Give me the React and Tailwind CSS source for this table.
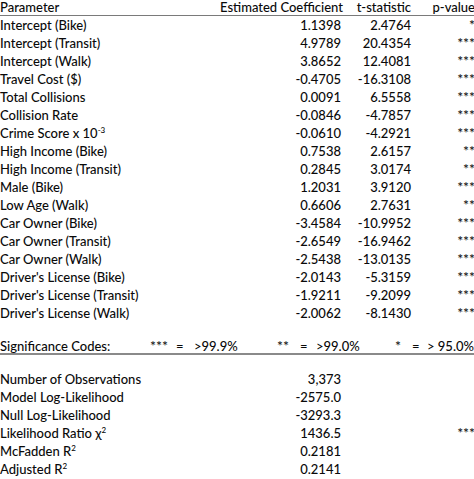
// Multinomial logit estimation results, laid out like a spreadsheet table.

const sup = (txt) => <sup className="-top-[5px] text-[8px]">{txt}</sup>;

const rows = [
  ["Intercept (Bike)", "1.1398", "2.4764", "*"],
  ["Intercept (Transit)", "4.9789", "20.4354", "***"],
  ["Intercept (Walk)", "3.8652", "12.4081", "***"],
  ["Travel Cost ($)", "-0.4705", "-16.3108", "***"],
  ["Total Collisions", "0.0091", "6.5558", "***"],
  ["Collision Rate", "-0.0846", "-4.7857", "***"],
  [<>Crime Score x 10{sup("-3")}</>, "-0.0610", "-4.2921", "***"],
  ["High Income (Bike)", "0.7538", "2.6157", "**"],
  ["High Income (Transit)", "0.2845", "3.0174", "**"],
  ["Male (Bike)", "1.2031", "3.9120", "***"],
  ["Low Age (Walk)", "0.6606", "2.7631", "**"],
  ["Car Owner (Bike)", "-3.4584", "-10.9952", "***"],
  ["Car Owner (Transit)", "-2.6549", "-16.9462", "***"],
  ["Car Owner (Walk)", "-2.5438", "-13.0135", "***"],
  ["Driver's License (Bike)", "-2.0143", "-5.3159", "***"],
  ["Driver's License (Transit)", "-1.9211", "-9.2099", "***"],
  ["Driver's License (Walk)", "-2.0062", "-8.1430", "***"],
];

const stats = [
  ["Number of Observations", "3,373", ""],
  ["Model Log-Likelihood", "-2575.0", ""],
  ["Null Log-Likelihood", "-3293.3", ""],
  [<>Likelihood Ratio χ{sup("2")}</>, "1436.5", "***"],
  [<>McFadden R{sup("2")}</>, "0.2181", ""],
  [<>Adjusted R{sup("2")}</>, "0.2141", ""],
];

function Row({ label, coef, t, p }) {
  return (
    <div className="grid h-[18px] grid-cols-[220px_121px_70px_64px] items-center leading-[18px]">
      <span className="whitespace-nowrap">{label}</span>
      <span className="text-right">{coef}</span>
      <span className="text-right">{t}</span>
      <span className="text-right text-[14px]">{p}</span>
    </div>
  );
}

export default function App() {
  return (
    <div className="h-[479px] w-[474px] overflow-hidden bg-white">
      <div className="w-[475px] font-['Lato',sans-serif] text-[13px] font-medium text-[#0a0a0a]">
        <div className="grid h-[16px] grid-cols-[220px_121px_70px_64px] border-b-[1.5px] border-[#7a7a7a] leading-[14px]">
          <span>Parameter</span>
          <span className="whitespace-nowrap text-right">Estimated Coefficient</span>
          <span className="text-right">t-statistic</span>
          <span className="text-right">p-value</span>
        </div>

        {rows.map(([label, coef, t, p], i) => (
          <Row key={i} label={label} coef={coef} t={t} p={p} />
        ))}

        <div className="mt-[16px] flex h-[17px] items-start border-b-2 border-[#8a8a8a] leading-[16px]">
          <span className="w-[150px] whitespace-nowrap">Significance Codes:</span>
          <span className="w-[26px] text-[14px]">***</span>
          <span className="w-[18px]">=</span>
          <span className="w-[83px]">&gt;99.9%</span>
          <span className="w-[23px] text-[14px]">**</span>
          <span className="w-[16px]">=</span>
          <span className="w-[79px]">&gt;99.0%</span>
          <span className="w-[17px] text-[14px]">*</span>
          <span className="w-[15px]">=</span>
          <span className="whitespace-nowrap">&gt; 95.0%</span>
        </div>

        <div className="mt-[15px]">
          {stats.map(([label, value, p], i) => (
            <Row key={i} label={label} coef={value} t="" p={p} />
          ))}
        </div>
      </div>
    </div>
  );
}
